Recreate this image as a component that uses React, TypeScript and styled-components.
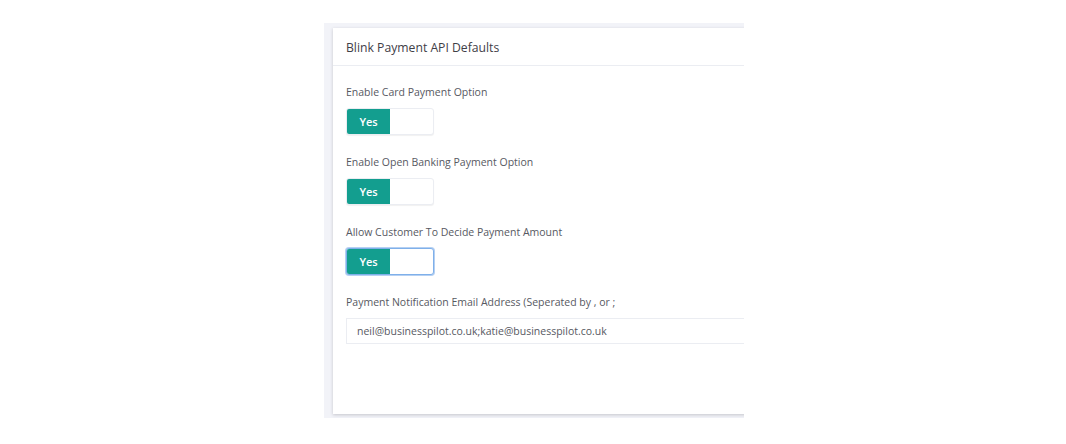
import React from "react";
import styled, { createGlobalStyle } from "styled-components";

const Global = createGlobalStyle`
  html, body { margin: 0; padding: 0; background: #ffffff; }
  body { font-family: "Open Sans", "Noto Sans", sans-serif; }
`;

const Page = styled.div`
  width: 1066px;
  height: 444px;
  display: flex;
  justify-content: flex-start;
  padding: 23px 0 0 324px;
  box-sizing: border-box;
`;

const Backdrop = styled.div`
  width: 420px;
  height: 395px;
  background: #f2f3f8;
  overflow: hidden;
  padding: 5px 0 0 9px;
  box-sizing: border-box;
`;

const Card = styled.div`
  width: 520px;
  height: 386px;
  background: #ffffff;
  box-shadow: 0 1px 3px rgba(69, 65, 78, 0.25);
  display: flex;
  flex-direction: column;
`;

const Header = styled.div`
  height: 38px;
  border-bottom: 1px solid #ebedf2;
  display: flex;
  align-items: center;
  padding: 1px 0 0 13px;
  box-sizing: border-box;
  font-size: 12.2px;
  color: #3f4047;
`;

const Body = styled.div`
  padding: 18px 0 0 13px;
  display: flex;
  flex-direction: column;
  gap: 19px;
`;

const Group = styled.div`
  display: flex;
  flex-direction: column;
  gap: 8px;
`;

const Label = styled.div`
  font-size: 10.5px;
  line-height: 16px;
  color: #575962;
`;

const Toggle = styled.div<{ $focused?: boolean }>`
  width: 88px;
  height: 27px;
  display: flex;
  border-radius: 3px;
  overflow: hidden;
  box-sizing: border-box;
  border: 1px solid ${(p) => (p.$focused ? "#7fb0ea" : "#ebedf2")};
  box-shadow: ${(p) => (p.$focused ? "0 0 0 1px #b5d0f2" : "0 1px 1px rgba(0,0,0,0.06)")};
  background: #ffffff;
`;

const On = styled.div`
  width: 43px;
  background: #139e8f;
  color: #ffffff;
  font-size: 11px;
  font-weight: 600;
  display: flex;
  align-items: center;
  justify-content: center;
`;

const Input = styled.div`
  width: 500px;
  height: 26px;
  border: 1px solid #ebedf2;
  box-sizing: border-box;
  display: flex;
  align-items: center;
  padding-left: 10px;
  font-size: 10.5px;
  color: #575962;
`;

const toggles = [
  { label: "Enable Card Payment Option", focused: false },
  { label: "Enable Open Banking Payment Option", focused: false },
  { label: "Allow Customer To Decide Payment Amount", focused: true },
];

export default function App() {
  return (
    <>
      <Global />
      <Page>
        <Backdrop>
          <Card>
            <Header>Blink Payment API Defaults</Header>
            <Body>
              {toggles.map((t) => (
                <Group key={t.label}>
                  <Label>{t.label}</Label>
                  <Toggle $focused={t.focused}>
                    <On>Yes</On>
                  </Toggle>
                </Group>
              ))}
              <Group>
                <Label>Payment Notification Email Address (Seperated by , or ;</Label>
                <Input>neil@businesspilot.co.uk;katie@businesspilot.co.uk</Input>
              </Group>
            </Body>
          </Card>
        </Backdrop>
      </Page>
    </>
  );
}
